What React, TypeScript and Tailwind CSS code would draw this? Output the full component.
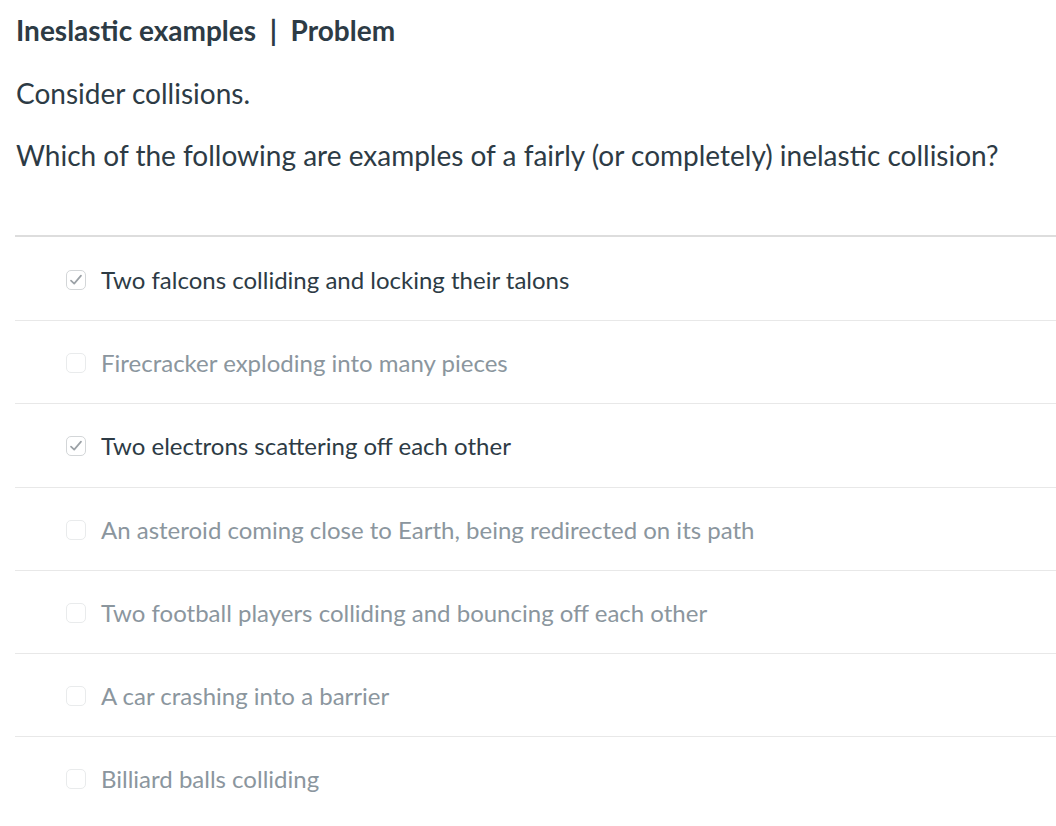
import React from "react";

const options = [
  { label: "Two falcons colliding and locking their talons", checked: true },
  { label: "Firecracker exploding into many pieces", checked: false },
  { label: "Two electrons scattering off each other", checked: true },
  { label: "An asteroid coming close to Earth, being redirected on its path", checked: false },
  { label: "Two football players colliding and bouncing off each other", checked: false },
  { label: "A car crashing into a barrier", checked: false },
  { label: "Billiard balls colliding", checked: false },
];

const CheckBox = ({ checked }: { checked: boolean }) => (
  <span
    className={`flex h-[20px] w-[20px] shrink-0 items-center justify-center rounded-[5px] border bg-white ${
      checked ? "border-[#d3d6d8]" : "border-[#e9ebec]"
    }`}
  >
    {checked && (
      <svg width="14" height="14" viewBox="0 0 14 14" fill="none">
        <path d="M2 7.6 L5.2 10.6 L12 2.6" stroke="#9ba1a6" strokeWidth="1.7" strokeLinecap="round" strokeLinejoin="round" />
      </svg>
    )}
  </span>
);

export default function App() {
  return (
    <div className="min-h-screen bg-white font-['Lato','Open_Sans',sans-serif] text-[#2d3b45]">
      <div className="px-4 pt-[12px]">
        <h1 className="text-[28px] font-bold leading-[36px]">Ineslastic examples&nbsp;&nbsp;|&nbsp;&nbsp;Problem</h1>
        <p className="mt-[27px] text-[28px] leading-[36px]">Consider collisions.</p>
        <p className="mt-[26px] text-[28px] leading-[36px]">
          Which of the following are examples of a fairly (or completely) inelastic collision?
        </p>
      </div>
      <div className="ml-[15px] mt-[62px] border-t-2 border-[#dddddd]">
        {options.map((opt, i) => (
          <div
            key={opt.label}
            className={`flex h-[83.2px] items-center gap-[15px] pl-[51px] pt-[2px] ${i > 0 ? "border-t border-[#e8e8e8]" : ""}`}
          >
            <CheckBox checked={opt.checked} />
            <span className={`text-[24px] ${opt.checked ? "text-[#2d3b45]" : "text-[#8b969e]"}`}>{opt.label}</span>
          </div>
        ))}
      </div>
    </div>
  );
}
